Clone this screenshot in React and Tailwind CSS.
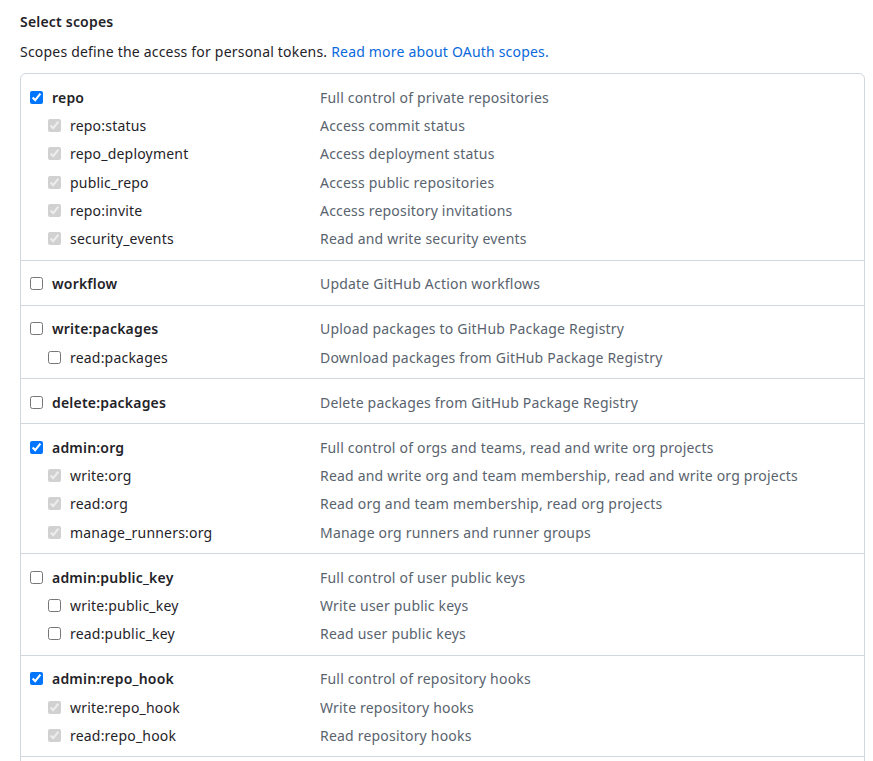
import React from "react";

const groups = [
  {
    name: "repo",
    desc: "Full control of private repositories",
    checked: true,
    children: [
      ["repo:status", "Access commit status"],
      ["repo_deployment", "Access deployment status"],
      ["public_repo", "Access public repositories"],
      ["repo:invite", "Access repository invitations"],
      ["security_events", "Read and write security events"],
    ],
  },
  { name: "workflow", desc: "Update GitHub Action workflows", checked: false, children: [] },
  {
    name: "write:packages",
    desc: "Upload packages to GitHub Package Registry",
    checked: false,
    children: [["read:packages", "Download packages from GitHub Package Registry"]],
  },
  { name: "delete:packages", desc: "Delete packages from GitHub Package Registry", checked: false, children: [] },
  {
    name: "admin:org",
    desc: "Full control of orgs and teams, read and write org projects",
    checked: true,
    children: [
      ["write:org", "Read and write org and team membership, read and write org projects"],
      ["read:org", "Read org and team membership, read org projects"],
      ["manage_runners:org", "Manage org runners and runner groups"],
    ],
  },
  {
    name: "admin:public_key",
    desc: "Full control of user public keys",
    checked: false,
    children: [
      ["write:public_key", "Write user public keys"],
      ["read:public_key", "Read user public keys"],
    ],
  },
  {
    name: "admin:repo_hook",
    desc: "Full control of repository hooks",
    checked: true,
    children: [
      ["write:repo_hook", "Write repository hooks"],
      ["read:repo_hook", "Read repository hooks"],
    ],
  },
];

const Row = ({ label, desc, checked, sub, parentChecked }) => (
  <div className="flex items-center h-[28.33px]">
    <div className={"flex items-center w-[290px] " + (sub ? "pl-[18px]" : "")}>
      <input
        type="checkbox"
        className="m-0 w-[13px] h-[13px]"
        checked={sub ? parentChecked : checked}
        disabled={sub && parentChecked}
        readOnly
      />
      <span className={"ml-[9px] " + (sub ? "" : "font-semibold")}>{label}</span>
    </div>
    <span className="text-[#59636e]">{desc}</span>
  </div>
);

export default function App() {
  return (
    <div
      className="bg-white text-[14px] tracking-[0.2px] text-[#1f2328] pl-[20px] pr-[8px] pt-[11px] overflow-hidden h-[761px]"
      style={{ fontFamily: '"Noto Sans", "Segoe UI", sans-serif' }}
    >
      <h3 className="font-semibold leading-[22px]">Select scopes</h3>
      <p className="mt-[8px] leading-[22px]">
        Scopes define the access for personal tokens.{" "}
        <a href="#" className="text-[#0969da]">
          Read more about OAuth scopes.
        </a>
      </p>
      <div className="mt-[10px] border border-[#d0d7de] rounded-[6px]">
        {groups.map((g, i) => (
          <div key={g.name} className={"pl-[9px] pt-[9px] pb-[6.67px] " + (i > 0 ? "border-t border-[#d0d7de]" : "")}>
            <Row label={g.name} desc={g.desc} checked={g.checked} />
            {g.children.map(([l, d]) => (
              <Row key={l} label={l} desc={d} sub parentChecked={g.checked} />
            ))}
          </div>
        ))}
        {/* next group continues below the fold */}
        <div className="border-t border-[#d0d7de] h-[44px]" />
      </div>
    </div>
  );
}
